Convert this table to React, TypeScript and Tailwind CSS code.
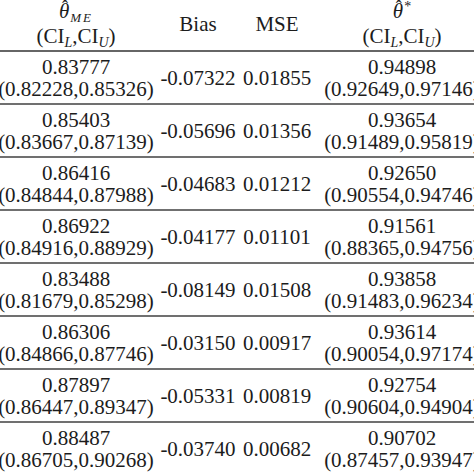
import React from "react";

type Row = { est: string; ci: string; bias: string; mse: string; est2: string; ci2: string };

const rows: Row[] = [
  { est: "0.83777", ci: "(0.82228,0.85326)", bias: "-0.07322", mse: "0.01855", est2: "0.94898", ci2: "(0.92649,0.97146)" },
  { est: "0.85403", ci: "(0.83667,0.87139)", bias: "-0.05696", mse: "0.01356", est2: "0.93654", ci2: "(0.91489,0.95819)" },
  { est: "0.86416", ci: "(0.84844,0.87988)", bias: "-0.04683", mse: "0.01212", est2: "0.92650", ci2: "(0.90554,0.94746)" },
  { est: "0.86922", ci: "(0.84916,0.88929)", bias: "-0.04177", mse: "0.01101", est2: "0.91561", ci2: "(0.88365,0.94756)" },
  { est: "0.83488", ci: "(0.81679,0.85298)", bias: "-0.08149", mse: "0.01508", est2: "0.93858", ci2: "(0.91483,0.96234)" },
  { est: "0.86306", ci: "(0.84866,0.87746)", bias: "-0.03150", mse: "0.00917", est2: "0.93614", ci2: "(0.90054,0.97174)" },
  { est: "0.87897", ci: "(0.86447,0.89347)", bias: "-0.05331", mse: "0.00819", est2: "0.92754", ci2: "(0.90604,0.94904)" },
  { est: "0.88487", ci: "(0.86705,0.90268)", bias: "-0.03740", mse: "0.00682", est2: "0.90702", ci2: "(0.87457,0.93947)" },
];

// column centres ≈ 76, 198, 277, 402 (table is cropped on both sides)
const cols = "grid grid-cols-[172px_72px_86px_164px]";

function Cell({ children }: { children: React.ReactNode }) {
  return <div className="flex flex-col items-center justify-center whitespace-nowrap">{children}</div>;
}

function ThetaHat({ sub, sup }: { sub?: string; sup?: string }) {
  return (
    <span className="inline-flex items-baseline">
      <span className="relative inline-block italic">
        θ
        <span className="absolute left-[3px] top-[-4px] not-italic text-[18px]">ˆ</span>
      </span>
      {sub && <span className="relative top-[4px] ml-[1px] text-[13px] italic tracking-[2px]">{sub}</span>}
      {sup && <span className="relative top-[-7px] ml-[1px] text-[14px]">{sup}</span>}
    </span>
  );
}

function CiLabel() {
  return (
    <span>
      (CI<span className="relative top-[4px] text-[14px] italic">L</span>,CI
      <span className="relative top-[4px] text-[14px] italic">U</span>)
    </span>
  );
}

export default function App() {
  return (
    <div className="h-[474px] w-[474px] overflow-hidden bg-white font-[family-name:Liberation_Serif,serif] text-[21px] text-[#1c1c1c]">
      <div className="ml-[-10px] w-[494px]">
        <div className={`${cols} h-[52px] border-b-2 border-[#666] pb-[4px] leading-[23px]`}>
          <Cell>
            <ThetaHat sub="ME" />
            <CiLabel />
          </Cell>
          <Cell>
            <span className="mb-[2px]">Bias</span>
          </Cell>
          <Cell>
            <span className="mb-[2px]">MSE</span>
          </Cell>
          <Cell>
            <ThetaHat sup="*" />
            <CiLabel />
          </Cell>
        </div>
        {rows.map((r) => (
          <div key={r.est} className={`${cols} h-[53px] border-b-2 border-[#707070] leading-[22px]`}>
            <Cell>
              <span>{r.est}</span>
              <span>{r.ci}</span>
            </Cell>
            <Cell>{r.bias}</Cell>
            <Cell>{r.mse}</Cell>
            <Cell>
              <span>{r.est2}</span>
              <span>{r.ci2}</span>
            </Cell>
          </div>
        ))}
      </div>
    </div>
  );
}
